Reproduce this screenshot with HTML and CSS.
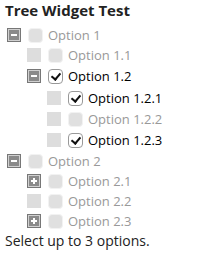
FILE: index.html
```html
<!DOCTYPE html>
<html lang="en">
<head>
    <meta charset="UTF-8">
    <title>Tree Widget Test</title>
    <link rel="stylesheet" href="styles.css">
</head>
<body>
    <div class="title">Tree Widget Test</div>

    <div class="tree">
        <div class="row lvl0">
            <span class="exp open"></span><span class="cb"></span><span class="label">Option 1</span>
        </div>
        <div class="row lvl1">
            <span class="exp leaf"></span><span class="cb"></span><span class="label">Option 1.1</span>
        </div>
        <div class="row lvl1 on">
            <span class="exp open"></span><span class="cb checked"></span><span class="label">Option 1.2</span>
        </div>
        <div class="row lvl2 on">
            <span class="exp leaf"></span><span class="cb checked"></span><span class="label">Option 1.2.1</span>
        </div>
        <div class="row lvl2">
            <span class="exp leaf"></span><span class="cb"></span><span class="label">Option 1.2.2</span>
        </div>
        <div class="row lvl2 on">
            <span class="exp leaf"></span><span class="cb checked"></span><span class="label">Option 1.2.3</span>
        </div>
        <div class="row lvl0">
            <span class="exp open"></span><span class="cb"></span><span class="label">Option 2</span>
        </div>
        <div class="row lvl1">
            <span class="exp closed"></span><span class="cb"></span><span class="label">Option 2.1</span>
        </div>
        <div class="row lvl1">
            <span class="exp leaf"></span><span class="cb"></span><span class="label">Option 2.2</span>
        </div>
        <div class="row lvl1">
            <span class="exp closed"></span><span class="cb"></span><span class="label">Option 2.3</span>
        </div>
    </div>

    <div class="note">Select up to 3 options.</div>
</body>
</html>
```

FILE: styles.css
```css
body {
    font-family: "Open Sans", sans-serif;
    font-size: 13px;
    color: #222;
    margin: 0 5px;
}
.title {
    font-weight: bold;
    font-size: 15px;
    line-height: 20px;
    margin-bottom: 5px;
}
.row {
    display: flex;
    align-items: center;
    height: 20px;
    color: #999;
}
.row.on {
    color: #000;
    height: 22px;
}
.lvl0 { padding-left: 2px; }
.lvl1 { padding-left: 22px; }
.lvl2 { padding-left: 42px; }
.exp {
    width: 14px;
    height: 14px;
    box-sizing: border-box;
    margin-right: 7px;
    position: relative;
}
.exp.leaf {
    background: #ddd;
}
.exp.open, .exp.closed {
    background: #8a8a8a;
    border: 2px solid #d0d0d0;
    outline: 1px solid #777;
    outline-offset: -1px;
}
.exp.open::before, .exp.closed::before {
    content: "";
    position: absolute;
    left: 2px;
    right: 2px;
    top: 4px;
    height: 2px;
    background: #fff;
}
.exp.closed::after {
    content: "";
    position: absolute;
    top: 2px;
    bottom: 2px;
    left: 4px;
    width: 2px;
    background: #fff;
}
.cb {
    width: 15px;
    height: 15px;
    box-sizing: border-box;
    border-radius: 4px;
    background: #e0e0e0;
    border: 1px solid #f2f2f2;
    margin-right: 5px;
    position: relative;
}
.cb.checked {
    background: #fff;
    border: 1px solid #999;
}
.cb.checked::after {
    content: "";
    position: absolute;
    left: 4px;
    top: 1px;
    width: 4px;
    height: 7px;
    border: solid #111;
    border-width: 0 2px 2px 0;
    transform: rotate(40deg);
}
.note {
    font-size: 14px;
}
```
